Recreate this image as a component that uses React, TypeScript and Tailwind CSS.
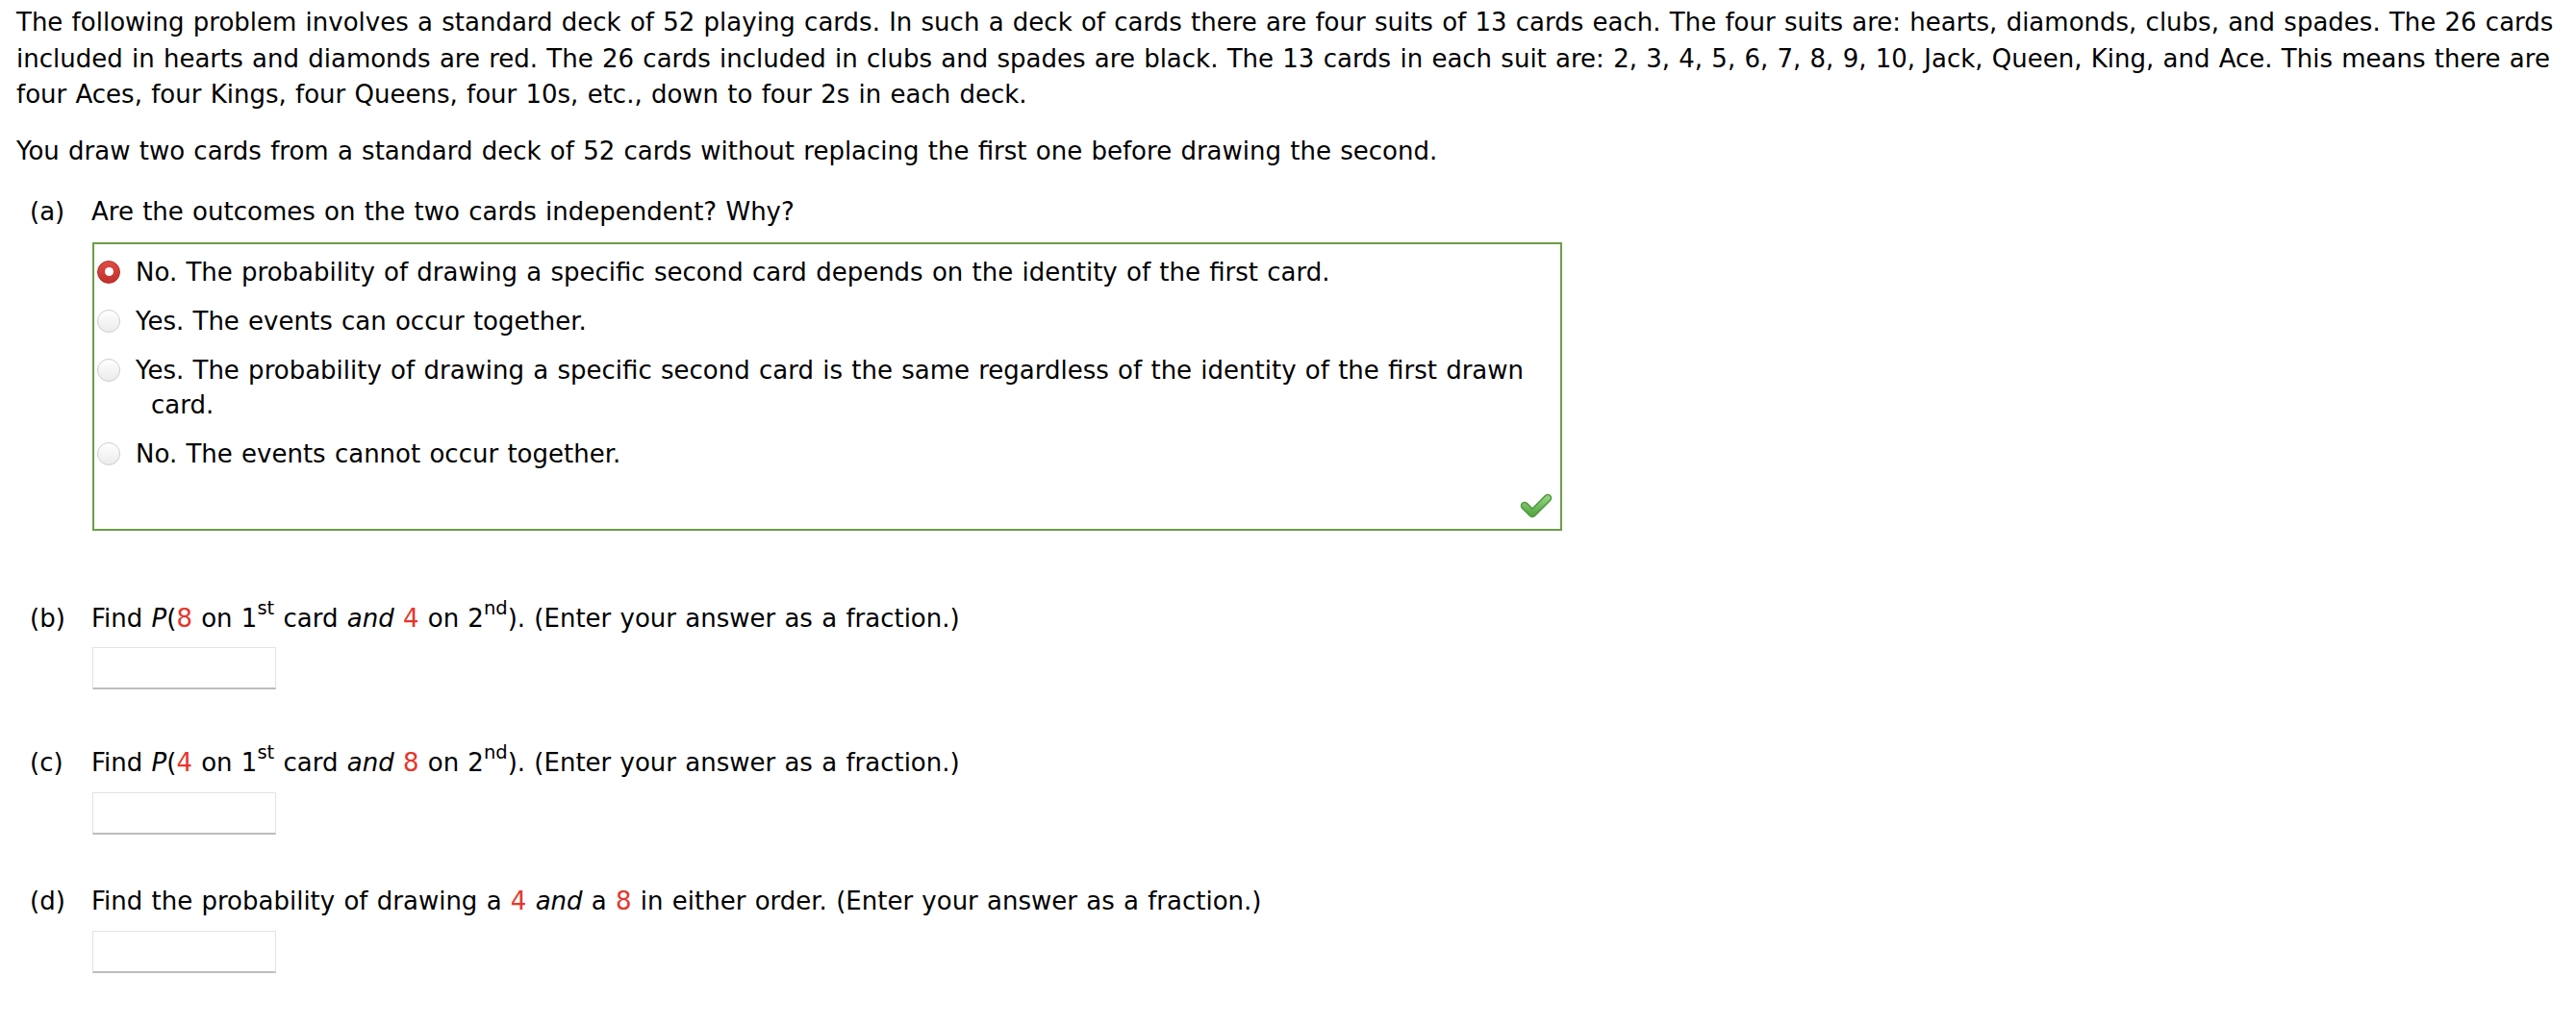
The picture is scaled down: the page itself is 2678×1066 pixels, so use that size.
import React from "react";

function Radio({ checked }: { checked?: boolean }) {
  if (checked) {
    return (
      <span className="mt-[6px] flex h-[24px] w-[24px] shrink-0 items-center justify-center rounded-full border border-[#b52a25] bg-linear-to-b from-[#de4c45] to-[#c0302b]">
        <span className="block h-[9px] w-[9px] rounded-full bg-white" />
      </span>
    );
  }
  return (
    <span className="mt-[6px] block h-[24px] w-[24px] shrink-0 rounded-full border border-[#cdcdcd] bg-linear-to-b from-white to-[#ebebeb] shadow-[inset_0_1px_1px_rgba(255,255,255,0.9)]" />
  );
}

function Option({ checked, children }: { checked?: boolean; children: React.ReactNode }) {
  return (
    <div className="flex items-start">
      <div className="ml-[3px] shrink-0">
        <Radio checked={checked} />
      </div>
      <div className="ml-[32px] pr-[14px] -indent-[16px] leading-[36px]">{children}</div>
    </div>
  );
}

function Check() {
  return (
    <svg width="34" height="28" viewBox="0 0 34 28">
      <defs>
        <linearGradient id="ck" x1="0" y1="0" x2="0" y2="1">
          <stop offset="0" stopColor="#8fd17c" />
          <stop offset="1" stopColor="#5aa948" />
        </linearGradient>
      </defs>
      <path d="M5 14 L13 22 L29 6" fill="none" stroke="#4f953f" strokeWidth="8.5" strokeLinecap="round" strokeLinejoin="round" />
      <path d="M5 14 L13 22 L29 6" fill="none" stroke="url(#ck)" strokeWidth="5.5" strokeLinecap="round" strokeLinejoin="round" />
    </svg>
  );
}

function Input({ className }: { className?: string }) {
  return (
    <div
      className={
        "ml-px h-[44px] w-[191px] border border-b-2 border-[#e2e2e2] border-b-[#bdbdbd] bg-white " + (className ?? "")
      }
    />
  );
}

const red = "text-[#e8352b]";

export default function App() {
  return (
    <div className="min-h-[1066px] bg-white px-[17px] pt-[5px] font-[family-name:DejaVu_Sans,Verdana,sans-serif] text-[26px] leading-[33px] text-black [word-spacing:1px]">
      <p className="leading-[37.5px]">
        The following problem involves a standard deck of 52 playing cards. In such a deck of cards there are four
        suits of 13 cards each. The four suits are: hearts, diamonds, clubs, and spades. The 26 cards included in
        hearts and diamonds are red. The 26 cards included in clubs and spades are black. The 13 cards in each suit
        are: 2, 3, 4, 5, 6, 7, 8, 9, 10, Jack, Queen, King, and Ace. This means there are four Aces, four Kings, four
        Queens, four 10s, etc., down to four 2s in each deck.
      </p>
      <p className="mt-[23px]">
        You draw two cards from a standard deck of 52 cards without replacing the first one before drawing the second.
      </p>

      {/* (a) */}
      <div className="mt-[30px] flex pl-[14px]">
        <div className="w-[64px] shrink-0">(a)</div>
        <div className="flex-1">
          <div>Are the outcomes on the two cards independent? Why?</div>
          <div className="ml-px mt-[15px] w-[1528px] border-2 border-[#6b9d47] pt-[11px]">
            <div className="flex flex-col gap-[15px]">
              <Option checked>No. The probability of drawing a specific second card depends on the identity of the first card.</Option>
              <Option>Yes. The events can occur together.</Option>
              <Option>
                Yes. The probability of drawing a specific second card is the same regardless of the identity of the
                first drawn card.
              </Option>
              <Option>No. The events cannot occur together.</Option>
            </div>
            <div className="mt-[22px] flex justify-end pb-[10px] pr-[8px]">
              <Check />
            </div>
          </div>
        </div>
      </div>

      {/* (b) */}
      <div className="mt-[75px] flex pl-[14px]">
        <div className="w-[64px] shrink-0">(b)</div>
        <div className="flex-1">
          <div>
            Find <i>P</i>(<span className={red}>8</span> on 1<sup className="top-[-13px]">st</sup> card <i>and</i>{" "}
            <span className={red}>4</span> on 2<sup className="top-[-13px]">nd</sup>). (Enter your answer as a fraction.)
          </div>
          <Input className="mt-[13px]" />
        </div>
      </div>

      {/* (c) */}
      <div className="mt-[60px] flex pl-[14px]">
        <div className="w-[64px] shrink-0">(c)</div>
        <div className="flex-1">
          <div>
            Find <i>P</i>(<span className={red}>4</span> on 1<sup className="top-[-13px]">st</sup> card <i>and</i>{" "}
            <span className={red}>8</span> on 2<sup className="top-[-13px]">nd</sup>). (Enter your answer as a fraction.)
          </div>
          <Input className="mt-[14px]" />
        </div>
      </div>

      {/* (d) */}
      <div className="mt-[53px] flex pl-[14px]">
        <div className="w-[64px] shrink-0">(d)</div>
        <div className="flex-1">
          <div>
            Find the probability of drawing a <span className={red}>4</span> <i>and</i> a{" "}
            <span className={red}>8</span> in either order. (Enter your answer as a fraction.)
          </div>
          <Input className="mt-[14px]" />
        </div>
      </div>
    </div>
  );
}
